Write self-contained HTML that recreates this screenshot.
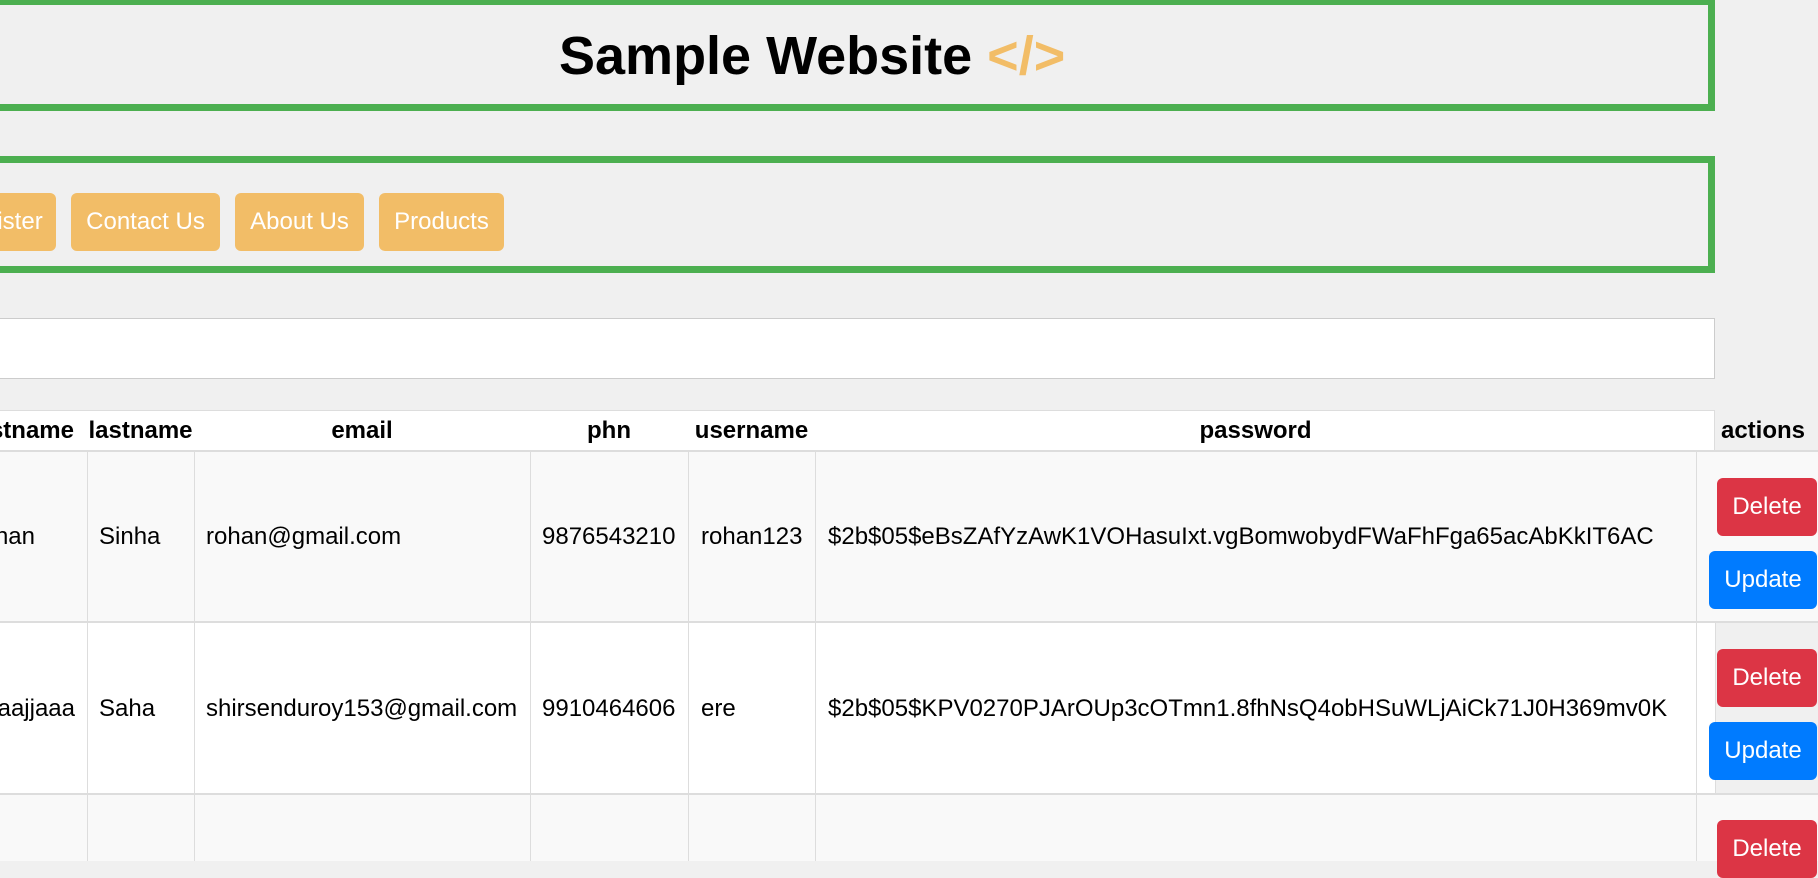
<!DOCTYPE html>
<html><head><meta charset="utf-8"><style>
*{margin:0;padding:0;box-sizing:border-box}
body{width:1818px;height:861px;overflow:hidden;background:#f0f0f0;font-family:"Liberation Sans",Arial,sans-serif;font-size:24px;color:#000;position:relative}
.a{position:absolute}
.box{position:absolute;border:7px solid #4caf50}
.nb{position:absolute;top:193px;height:58px;background:#f2bd67;color:#fff;border-radius:6px;line-height:58px;text-align:center}
.th{position:absolute;top:412px;height:38px;line-height:38px;font-weight:bold;text-align:center}
.row{position:absolute;left:0;width:1818px}
.vl{position:absolute;width:1px;background:#ddd}
.t{position:absolute;line-height:28px;white-space:nowrap}
.btn{position:absolute;color:#fff;border-radius:6px;text-align:center;height:58px;line-height:58px}
.del{background:#dc3545;left:1717px;width:100px}
.upd{background:#007bff;left:1709px;width:108px}
</style></head><body>
<div class="box" style="left:-10px;top:-2px;width:1725px;height:113px"></div>
<div class="a" style="left:559px;top:23px;font-size:54px;font-weight:bold;line-height:66px;white-space:nowrap">Sample Website <span style="color:#f2bd67">&lt;/&gt;</span></div>

<div class="box" style="left:-10px;top:156px;width:1725px;height:117px"></div>
<div class="nb" style="left:-60px;width:116px">Register</div>
<div class="nb" style="left:71px;width:149px">Contact Us</div>
<div class="nb" style="left:235px;width:129px">About Us</div>
<div class="nb" style="left:379px;width:125px">Products</div>

<div class="a" style="left:-2px;top:318px;width:1717px;height:61px;background:#fff;border:1px solid #ccc"></div>

<div class="a" style="left:-2px;top:410px;width:1717px;height:41px;background:#fff;border:1px solid #ddd;border-bottom:none"></div>
<div class="th" style="right:1744px">firstname</div>
<div class="th" style="left:87px;width:107px">lastname</div>
<div class="th" style="left:194px;width:336px">email</div>
<div class="th" style="left:530px;width:158px">phn</div>
<div class="th" style="left:688px;width:127px">username</div>
<div class="th" style="left:815px;width:881px">password</div>
<div class="th" style="left:1702px;width:122px">actions</div>

<div class="row" style="top:450px;height:171px;background:#f9f9f9;border-top:2px solid #ddd"></div>
<div class="row" style="top:621px;height:172px;background:#fff;border-top:2px solid #ddd;width:1715px"></div>
<div class="a" style="left:1715px;top:621px;width:103px;height:172px;border-top:2px solid #ddd;border-left:1px solid #ddd;background:#f0f0f0"></div>
<div class="row" style="top:793px;height:68px;background:#f9f9f9;border-top:2px solid #ddd"></div>

<div class="vl" style="left:87px;top:451px;height:410px"></div>
<div class="vl" style="left:194px;top:451px;height:410px"></div>
<div class="vl" style="left:530px;top:451px;height:410px"></div>
<div class="vl" style="left:688px;top:451px;height:410px"></div>
<div class="vl" style="left:815px;top:451px;height:410px"></div>
<div class="vl" style="left:1696px;top:451px;height:410px"></div>

<div class="t" style="right:1783px;top:523px">Rohan</div>
<div class="t" style="left:99px;top:523px">Sinha</div>
<div class="t" style="left:206px;top:523px">rohan@gmail.com</div>
<div class="t" style="left:542px;top:523px">9876543210</div>
<div class="t" style="left:701px;top:523px">rohan123</div>
<div class="t" style="left:828px;top:523px">$2b$05$eBsZAfYzAwK1VOHasuIxt.vgBomwobydFWaFhFga65acAbKkIT6AC</div>
<div class="btn del" style="top:478px">Delete</div>
<div class="btn upd" style="top:551px">Update</div>

<div class="t" style="right:1743px;top:695px">Shaajjaaa</div>
<div class="t" style="left:99px;top:695px">Saha</div>
<div class="t" style="left:206px;top:695px">shirsenduroy153@gmail.com</div>
<div class="t" style="left:542px;top:695px">9910464606</div>
<div class="t" style="left:701px;top:695px">ere</div>
<div class="t" style="left:828px;top:695px">$2b$05$KPV0270PJArOUp3cOTmn1.8fhNsQ4obHSuWLjAiCk71J0H369mv0K</div>
<div class="btn del" style="top:649px">Delete</div>
<div class="btn upd" style="top:722px">Update</div>

<div class="btn del" style="top:820px">Delete</div>
</body></html>
